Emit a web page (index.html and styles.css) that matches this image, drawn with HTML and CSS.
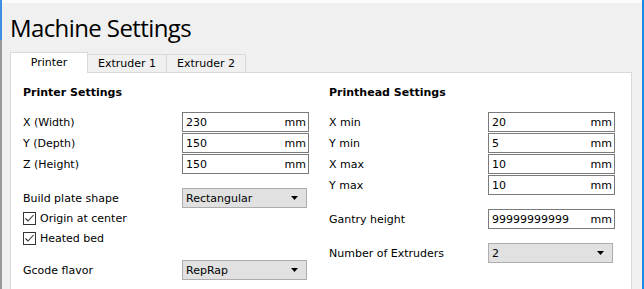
FILE: index.html
```html
<!DOCTYPE html>
<html lang="en">
<head>
  <meta charset="UTF-8">
  <meta name="viewport" content="width=device-width, initial-scale=1.0">
  <title>Machine Settings</title>
  <link rel="stylesheet" href="styles.css">
</head>
<body>

  <div class="edge-left"></div>

  <div class="window">
    <h1 class="title">Machine Settings</h1>

    <div class="tabs">
      <div class="tab active">Printer</div>
      <div class="tab">Extruder 1</div>
      <div class="tab">Extruder 2</div>
      <div class="tab-fill"></div>
    </div>

    <div class="panel">
      <!-- Printer settings -->
      <div class="column">
        <h2 class="section-title">Printer Settings</h2>

        <div class="fields">
          <div class="field">
            <label>X (Width)</label>
            <div class="input"><span>230</span><span>mm</span></div>
          </div>
          <div class="field">
            <label>Y (Depth)</label>
            <div class="input"><span>150</span><span>mm</span></div>
          </div>
          <div class="field">
            <label>Z (Height)</label>
            <div class="input"><span>150</span><span>mm</span></div>
          </div>
        </div>

        <div class="field spaced">
          <label>Build plate shape</label>
          <div class="combo">
            <span>Rectangular</span>
            <svg class="arrow" width="7" height="4" viewBox="0 0 7 4"><polygon points="0,0 7,0 3.5,4" fill="#000"/></svg>
          </div>
        </div>

        <div class="check-row">
          <span class="checkbox">
            <svg width="11" height="11" viewBox="0 0 11 11"><polyline points="1.5,5.5 4,8 9.5,2" fill="none" stroke="#333" stroke-width="1.1"/></svg>
          </span>
          Origin at center
        </div>
        <div class="check-row">
          <span class="checkbox">
            <svg width="11" height="11" viewBox="0 0 11 11"><polyline points="1.5,5.5 4,8 9.5,2" fill="none" stroke="#333" stroke-width="1.1"/></svg>
          </span>
          Heated bed
        </div>

        <div class="field spaced-sm">
          <label>Gcode flavor</label>
          <div class="combo">
            <span>RepRap</span>
            <svg class="arrow" width="7" height="4" viewBox="0 0 7 4"><polygon points="0,0 7,0 3.5,4" fill="#000"/></svg>
          </div>
        </div>
      </div>

      <!-- Printhead settings -->
      <div class="column wide">
        <h2 class="section-title">Printhead Settings</h2>

        <div class="fields">
          <div class="field">
            <label>X min</label>
            <div class="input"><span>20</span><span>mm</span></div>
          </div>
          <div class="field">
            <label>Y min</label>
            <div class="input"><span>5</span><span>mm</span></div>
          </div>
          <div class="field">
            <label>X max</label>
            <div class="input"><span>10</span><span>mm</span></div>
          </div>
          <div class="field">
            <label>Y max</label>
            <div class="input"><span>10</span><span>mm</span></div>
          </div>
        </div>

        <div class="field spaced">
          <label>Gantry height</label>
          <div class="input"><span>99999999999</span><span>mm</span></div>
        </div>

        <div class="field spaced">
          <label>Number of Extruders</label>
          <div class="combo">
            <span>2</span>
            <svg class="arrow" width="7" height="4" viewBox="0 0 7 4"><polygon points="0,0 7,0 3.5,4" fill="#000"/></svg>
          </div>
        </div>
      </div>
    </div>
  </div>

  <div class="edge-right"></div>

</body>
</html>
```

FILE: styles.css
```css
html, body {
  margin: 0;
  height: 289px;
  overflow: hidden;
}

body {
  display: flex;
  background: #f0f0f0;
  font-family: "DejaVu Sans", sans-serif;
  font-size: 11px;
  color: #000;
}

.edge-left {
  flex-shrink: 0;
  width: 2px;
  background: linear-gradient(#3d8fe0 0, #3d8fe0 40px, #9a9a9a 40px);
}

.edge-right {
  flex-shrink: 0;
  width: 2px;
  background: #1e88e5;
}

.window {
  flex: 1;
  min-width: 0;
  border-top: 3px solid #fbfbfb;
}

.title {
  margin: 8px 0 7px 8px;
  font-family: "Open Sans", sans-serif;
  font-weight: normal;
  font-size: 24px;
  letter-spacing: -0.6px;
  line-height: 34px;
}

/* tabs */
.tabs {
  display: flex;
  align-items: flex-end;
  margin: 0 10px 0 8px;
}

.tab {
  height: 17px;
  line-height: 17px;
  width: 78px;
  text-align: center;
  border: 1px solid #d9d9d9;
  border-left: none;
  background: #f0f0f0;
}

.tab.active {
  width: 76px;
  height: 20px;
  line-height: 19px;
  border-left: 1px solid #d9d9d9;
  border-bottom: none;
  background: #fff;
}

.tab-fill {
  flex: 1;
  border-bottom: 1px solid #d9d9d9;
}

/* panel */
.panel {
  display: flex;
  margin: 0 10px 0 8px;
  height: 204px;
  padding: 12px 0 0 12px;
  background: #fff;
  border-left: 1px solid #d9d9d9;
  border-right: 1px solid #d9d9d9;
}

.column {
  flex-shrink: 0;
  width: 306px;
}

.column.wide {
  flex: 1;
  width: auto;
}

.section-title {
  margin: 0;
  font-size: 11px;
  line-height: 15px;
  font-weight: bold;
}

.fields {
  display: flex;
  flex-direction: column;
  gap: 1px;
  margin-top: 12px;
}

.field {
  display: flex;
  align-items: center;
}

.field label {
  width: 159px;
}

.field.spaced {
  margin-top: 14px;
}

.field.spaced-sm {
  margin-top: 12px;
}

.input {
  display: flex;
  justify-content: space-between;
  align-items: center;
  box-sizing: border-box;
  width: 127px;
  height: 20px;
  padding: 0 2px 0 3px;
  border: 1px solid #7a7a7a;
  background: #fff;
}

.combo {
  display: flex;
  justify-content: space-between;
  align-items: center;
  box-sizing: border-box;
  width: 125px;
  height: 20px;
  padding: 0 8px 0 3px;
  border: 1px solid #adadad;
  background: #e1e1e1;
}

.check-row {
  display: flex;
  align-items: center;
  gap: 4px;
  height: 20px;
}

.checkbox {
  display: flex;
  align-items: center;
  justify-content: center;
  box-sizing: border-box;
  width: 13px;
  height: 13px;
  border: 1px solid #333;
  background: #fff;
}
```
